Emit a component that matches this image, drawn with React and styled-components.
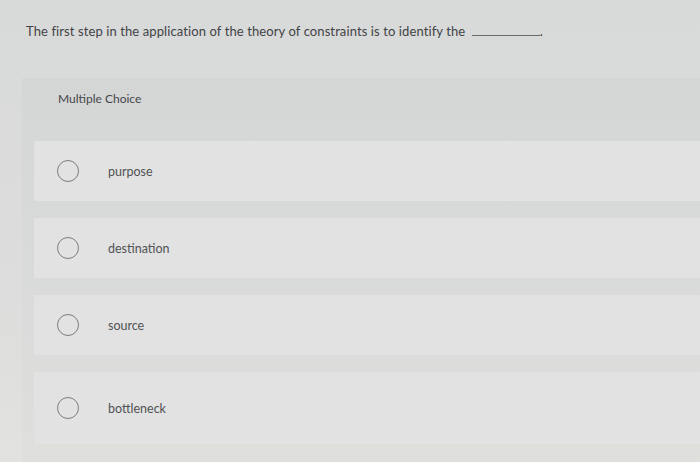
import styled, { createGlobalStyle } from "styled-components"

const GlobalStyle = createGlobalStyle`
  html, body {
    margin: 0;
    padding: 0;
    background: #d9dada;
  }
  body {
    font-family: Lato, "Open Sans", sans-serif;
  }
`

const options = ["purpose", "destination", "source", "bottleneck"]

const App = () => {
  return (
    <Page>
      <GlobalStyle />
      <Question>
        The first step in the application of the theory of constraints is to
        identify the <Blank />.
      </Question>
      <Panel>
        <PanelHeader>Multiple Choice</PanelHeader>
        <OptionList>
          {options.map((opt, i) => (
            <OptionRow key={opt} $tall={i === options.length - 1}>
              <Radio />
              <OptionText>{opt}</OptionText>
            </OptionRow>
          ))}
        </OptionList>
      </Panel>
    </Page>
  )
}
export default App

const Page = styled.div`
  width: 700px;
  height: 462px;
  overflow: hidden;
  display: flex;
  flex-direction: column;
  background: linear-gradient(180deg, #d8d9d9 0%, #dcdddc 60%, #e2e2df 100%);
`

const Question = styled.p`
  margin: 0;
  padding: 23px 0 0 26px;
  height: 54px;
  box-sizing: border-box;
  font-size: 13px;
  letter-spacing: 0.1px;
  color: #424346;
`

const Blank = styled.span`
  display: inline-block;
  width: 68px;
  margin-left: 3px;
  border-bottom: 1px solid #6a6b6d;
`

const Panel = styled.section`
  margin-left: 22px;
  flex: 1;
  display: flex;
  flex-direction: column;
  background: linear-gradient(180deg, #d4d5d5 0%, #d9dada 50%, #dfdfdc 100%);
  padding-bottom: 14px;
  margin-top: 24px;
`

const PanelHeader = styled.div`
  height: 42px;
  padding: 13px 0 0 36px;
  box-sizing: border-box;
  font-size: 12px;
  color: #46474a;
`

const OptionList = styled.div`
  display: flex;
  flex-direction: column;
  gap: 17px;
  padding-left: 12px;
  margin-top: 21px;
`

const OptionRow = styled.div`
  display: flex;
  align-items: center;
  height: ${(p) => (p.$tall ? "72px" : "60px")};
  padding-left: 23px;
  background: #e1e2e1;
`

const Radio = styled.span`
  width: 22px;
  height: 22px;
  border-radius: 50%;
  border: 1.5px solid #7c7d80;
  box-sizing: border-box;
  flex-shrink: 0;
`

const OptionText = styled.span`
  margin-left: 29px;
  font-size: 12.5px;
  color: #515255;
`
